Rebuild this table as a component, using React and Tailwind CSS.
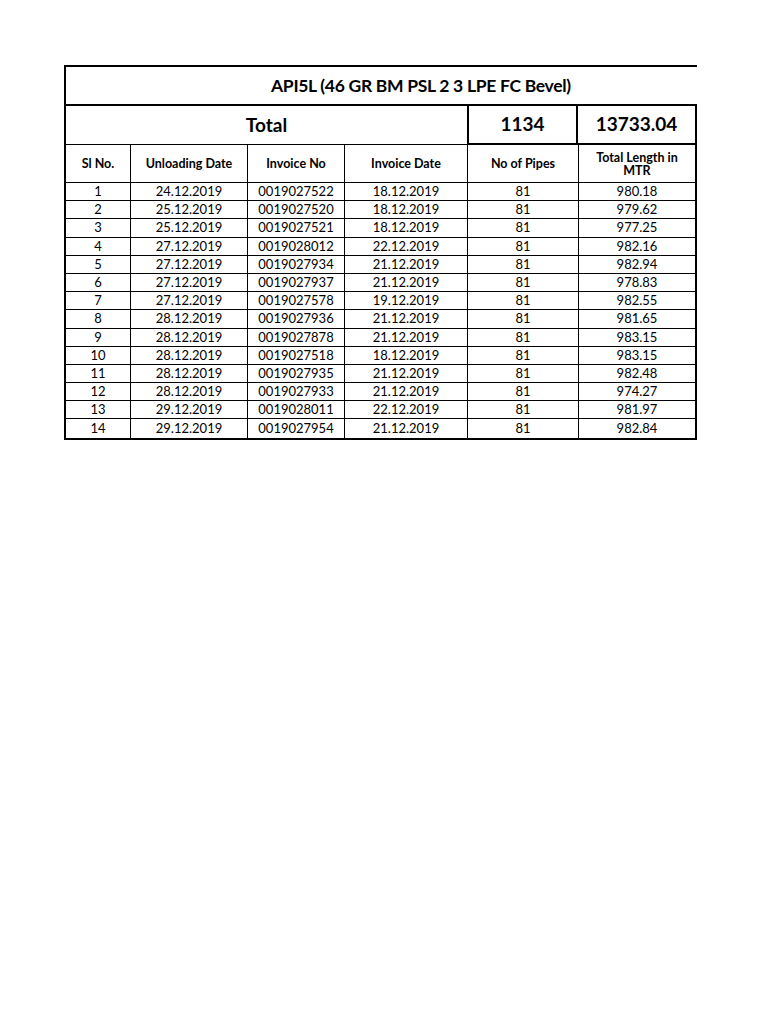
import React from 'react';

const rows = [
  ['1', '24.12.2019', '0019027522', '18.12.2019', '81', '980.18'],
  ['2', '25.12.2019', '0019027520', '18.12.2019', '81', '979.62'],
  ['3', '25.12.2019', '0019027521', '18.12.2019', '81', '977.25'],
  ['4', '27.12.2019', '0019028012', '22.12.2019', '81', '982.16'],
  ['5', '27.12.2019', '0019027934', '21.12.2019', '81', '982.94'],
  ['6', '27.12.2019', '0019027937', '21.12.2019', '81', '978.83'],
  ['7', '27.12.2019', '0019027578', '19.12.2019', '81', '982.55'],
  ['8', '28.12.2019', '0019027936', '21.12.2019', '81', '981.65'],
  ['9', '28.12.2019', '0019027878', '21.12.2019', '81', '983.15'],
  ['10', '28.12.2019', '0019027518', '18.12.2019', '81', '983.15'],
  ['11', '28.12.2019', '0019027935', '21.12.2019', '81', '982.48'],
  ['12', '28.12.2019', '0019027933', '21.12.2019', '81', '974.27'],
  ['13', '29.12.2019', '0019028011', '22.12.2019', '81', '981.97'],
  ['14', '29.12.2019', '0019027954', '21.12.2019', '81', '982.84'],
];

const headers = ['Sl No.', 'Unloading Date', 'Invoice No', 'Invoice Date', 'No of Pipes', 'Total Length in MTR'];
// column widths, border-r included
const widths = ['w-[65px]', 'w-[117px]', 'w-[97px]', 'w-[123px]', 'w-[111px]', 'w-[116px]'];

export default function App() {
  return (
    <div className="min-h-screen w-full bg-white pt-[65px] pl-[64px] text-black" style={{ fontFamily: 'Lato, "Open Sans", sans-serif' }}>
      <div className="w-[633px]">
        {/* title */}
        <div className="h-[41px] border-t-2 border-l-2 border-b-2 border-black flex items-center pl-[205px]">
          <span className="text-[17.5px] font-bold leading-none tracking-[-0.3px]">API5L (46 GR BM PSL 2 3 LPE FC Bevel)</span>
        </div>

        {/* total */}
        <div className="flex h-[39px]">
          <div className="w-[403px] border-l-2 border-b border-black flex items-center justify-center text-[19px] font-bold">Total</div>
          <div className="w-[111px] border-2 border-t-0 border-black flex items-center justify-center text-[19px] font-bold">1134</div>
          <div className="w-[119px] border-2 border-t-0 border-l-0 border-black flex items-center justify-center text-[19px] font-bold">13733.04</div>
        </div>

        {/* header */}
        <div className="flex h-[38px] border-l-2 border-r-2 border-b border-black">
          {headers.map((h, i) => (
            <div
              key={h}
              className={`${widths[i]} ${i < 5 ? 'border-r' : ''} border-black flex items-center justify-center text-center text-[12.5px] font-bold leading-[13px] px-2`}
            >
              {h}
            </div>
          ))}
        </div>

        {/* data */}
        <div className="border-l-2 border-r-2 border-b-2 border-black">
          {rows.map((r, ri) => (
            <div key={ri} className={`flex h-[18.2px] ${ri < rows.length - 1 ? 'border-b' : ''} border-black`}>
              {r.map((c, i) => (
                <div
                  key={i}
                  className={`${widths[i]} ${i < 5 ? 'border-r' : ''} border-black flex items-center justify-center text-[13px] leading-none`}
                >
                  {c}
                </div>
              ))}
            </div>
          ))}
        </div>
      </div>
    </div>
  );
}
